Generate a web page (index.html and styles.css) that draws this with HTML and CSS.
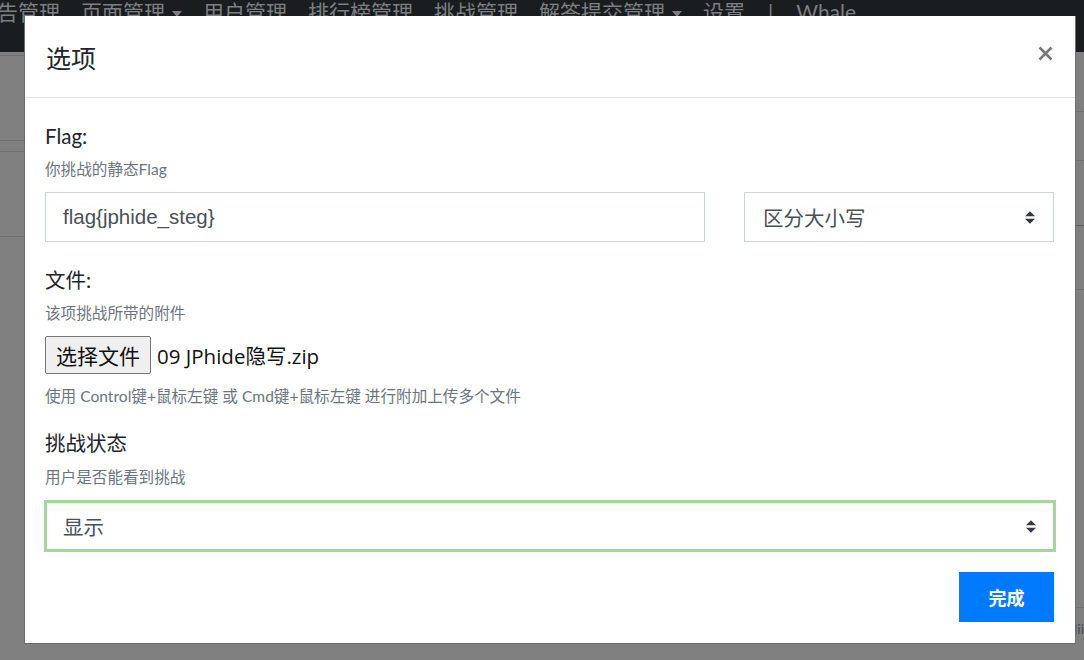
FILE: index.html
```html
<!DOCTYPE html>
<html lang="zh-CN">
<head>
<meta charset="utf-8">
<title>选项</title>
<link rel="stylesheet" href="styles.css">
</head>
<body>
<div class="page">
  <nav class="navbar">
    <ul class="nav-list">
      <li class="nav-item first">公告管理</li>
      <li class="nav-item">页面管理<span class="caret"></span></li>
      <li class="nav-item">用户管理</li>
      <li class="nav-item">排行榜管理</li>
      <li class="nav-item">挑战管理</li>
      <li class="nav-item">解答提交管理<span class="caret"></span></li>
      <li class="nav-item">设置</li>
      <li class="nav-item sep">|</li>
      <li class="nav-item">Whale</li>
    </ul>
  </nav>
  <div class="bg-body">
    <div class="bg-left">
      <div class="bg-row h4"></div>
      <div class="bg-row h85"></div>
      <div class="bg-row h11"></div>
      <div class="bg-row h85"></div>
    </div>
    <div class="bg-right">
      <div class="bg-row h60"></div>
      <div class="bg-row h49"></div>
      <div class="bg-row h65 dark"></div>
      <div class="bg-row h64"></div>
      <div class="bg-row h318"></div>
      <div class="bg-text">Whale lii</div>
    </div>
  </div>
</div>

<div class="modal">
  <div class="modal-header">
    <h3 class="modal-title">选项</h3>
    <span class="close" aria-label="Close">
      <svg width="15" height="15" viewBox="0 0 15 15"><path d="M1.5 1.5L13.5 13.5M13.5 1.5L1.5 13.5" stroke="#777" stroke-width="2.6" stroke-linecap="butt"/></svg>
    </span>
  </div>
  <div class="modal-body">
    <div class="group g1">
      <div class="label">Flag:</div>
      <div class="help">你挑战的静态Flag</div>
      <div class="flag-row">
        <div class="input">flag{jphide_steg}</div>
        <div class="select">
          <span>区分大小写</span>
          <svg class="arrows" width="10" height="13" viewBox="0 0 4 5"><path d="M2 0L0 2h4zm0 5L0 3h4z" fill="#343a40"/></svg>
        </div>
      </div>
    </div>

    <div class="group g2">
      <div class="label">文件:</div>
      <div class="help">该项挑战所带的附件</div>
      <div class="file-row">
        <span class="file-btn">选择文件</span>
        <span class="file-name">09 JPhide隐写.zip</span>
      </div>
      <div class="help help-after">使用 Control键+鼠标左键 或 Cmd键+鼠标左键 进行附加上传多个文件</div>
    </div>

    <div class="group g3">
      <div class="label">挑战状态</div>
      <div class="help help-tight">用户是否能看到挑战</div>
      <div class="select select-focus">
        <span>显示</span>
        <svg class="arrows" width="10" height="13" viewBox="0 0 4 5"><path d="M2 0L0 2h4zm0 5L0 3h4z" fill="#343a40"/></svg>
      </div>
    </div>

    <div class="actions">
      <span class="btn-primary">完成</span>
    </div>
  </div>
</div>
</body>
</html>
```

FILE: styles.css
```css
* { box-sizing: border-box; }

html, body {
  margin: 0;
  padding: 0;
}

body {
  width: 1084px;
  height: 660px;
  overflow: hidden;
  background: #808080;
  font-family: Lato, "Noto Sans CJK SC", sans-serif;
  color: #212529;
}

/* ---------- dimmed page behind the modal ---------- */
.page {
  width: 1084px;
  height: 660px;
  overflow: hidden;
}

.navbar {
  height: 52px;
  background: #1a1d20;
  overflow: hidden;
}

.nav-list {
  list-style: none;
  margin: 0;
  padding: 0;
  display: flex;
  gap: 21px;
  white-space: nowrap;
}

.nav-item {
  font-size: 21px;
  line-height: 24px;
  color: #7d7f82;
  display: flex;
  align-items: center;
}

.nav-item.first { margin-left: -24px; }
.nav-item.sep { padding: 0 2px; }

.caret {
  display: inline-block;
  width: 0;
  height: 0;
  margin-left: 7px;
  margin-top: 4px;
  border-top: 6px solid #7d7f82;
  border-left: 5px solid transparent;
  border-right: 5px solid transparent;
}

.bg-body {
  display: flex;
}

.bg-left { width: 540px; }
.bg-right { flex: 1; }

.bg-row {
  border-bottom: 1px solid #6f6f6f;
}
.bg-row.dark { border-bottom-color: #5f5f5f; }

.h4 { height: 4px; }
.h11 { height: 11px; }
.h49 { height: 49px; }
.h60 { height: 60px; }
.h64 { height: 64px; }
.h65 { height: 65px; }
.h85 { height: 85px; }
.h318 { height: 318px; }

.bg-text {
  padding: 13px 0 0 528px;
  font-size: 14px;
  line-height: 16px;
  color: #4a4a4a;
  white-space: nowrap;
}

/* ---------- modal ---------- */
.modal {
  position: fixed;
  left: 24px;
  top: 16px;
  width: 1052px;
  background: #fff;
  border: 1px solid #6a6a6a;
  border-top: 0;
  border-right-color: #707070;
}

.modal-header {
  height: 82px;
  border-bottom: 1px solid #dee2e6;
  padding: 0 22px 0 21px;
  display: flex;
  align-items: center;
  justify-content: space-between;
}

.modal-title {
  margin: 0;
  font-size: 25px;
  font-weight: 400;
  line-height: 34px;
  color: #212529;
  font-family: "Noto Sans CJK SC", sans-serif;
}

.close {
  display: flex;
  width: 15px;
  height: 15px;
  margin-top: -6px;
}

.modal-body {
  padding: 23px 21px 21px 20px;
}

.label {
  font-size: 20.5px;
  line-height: 30px;
  color: #212529;
  margin-bottom: 8px;
}

.help {
  font-size: 15.6px;
  line-height: 21px;
  color: #6c757d;
  margin-bottom: 12px;
}

.help-tight { margin-top: 9px; margin-bottom: 12px; }
.g3 .label { margin-bottom: 0; }

.help-after {
  margin-top: 12px;
  margin-bottom: 0;
}

.g1 { margin-bottom: 23px; }
.g2 { margin-bottom: 21px; }

.flag-row {
  display: grid;
  grid-template-columns: 660px 1fr;
  column-gap: 39px;
}

.input {
  height: 50px;
  border: 1px solid #ced4da;
  padding: 0 17px;
  display: flex;
  align-items: center;
  font-family: "Liberation Sans", Arial, sans-serif;
  font-size: 20.5px;
  color: #495057;
}

.select {
  height: 50px;
  border: 1px solid #ced4da;
  padding: 0 18px 0 18px;
  display: flex;
  align-items: center;
  justify-content: space-between;
  font-family: "Noto Sans CJK SC", sans-serif;
  font-size: 20.5px;
  color: #495057;
}

.select-focus {
  height: 52px;
  margin-left: -1px;
  margin-right: -2px;
  border: 3px solid #a6d5a0;
  padding: 0 17px 0 16px;
}

.arrows { display: block; }

.file-row {
  display: flex;
  align-items: center;
  height: 38px;
}

.file-btn {
  height: 38px;
  width: 106px;
  display: flex;
  align-items: center;
  justify-content: center;
  background: #efefef;
  border: 1px solid #767676;
  border-radius: 2px;
  font-family: "Noto Sans CJK SC", sans-serif;
  font-size: 21px;
  color: #111;
}

.file-name {
  margin-left: 6px;
  font-family: "Open Sans", "Noto Sans CJK SC", sans-serif;
  font-size: 20.5px;
  color: #111;
}

.actions {
  display: flex;
  justify-content: flex-end;
  margin-top: 20px;
}

.btn-primary {
  width: 95px;
  height: 50px;
  background: #007bff;
  color: #fff;
  display: flex;
  align-items: center;
  justify-content: center;
  font-family: "Noto Sans CJK SC", sans-serif;
  font-weight: 700;
  font-size: 18px;
  margin-right: 0;
}
```
